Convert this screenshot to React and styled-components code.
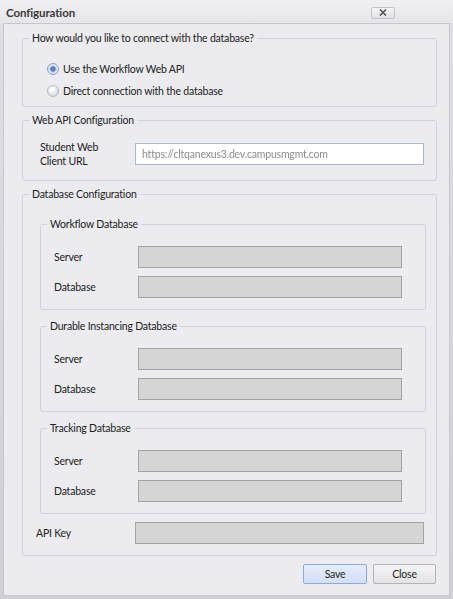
import React from "react";
import styled, { createGlobalStyle } from "styled-components";

const GlobalStyle = createGlobalStyle`
  html, body { margin: 0; padding: 0; }
  body {
    font-family: Lato, "Open Sans", "Liberation Sans", sans-serif;
    font-size: 10.5px;
    letter-spacing: -0.2px;
    color: #222;
    background: #d4d4da;
  }
`;

const Window = styled.div`
  width: 453px;
  height: 599px;
  box-sizing: border-box;
  display: flex;
  flex-direction: column;
  background: linear-gradient(#ececef, #dedee3 30px, #cfcfd5);
  padding: 0 3px 3px 3px;
`;

const TitleBar = styled.div`
  height: 23px;
  flex: none;
  display: flex;
  align-items: center;
  justify-content: space-between;
  background: linear-gradient(#f0f0f3, #e6e6ea);
  margin: 0 -3px;
  padding: 0 58px 0 6px;
`;

const Title = styled.div`
  font-weight: 700;
  font-size: 11.5px;
  letter-spacing: -0.1px;
  color: #3a3a3a;
  margin-top: 1px;
`;

const CloseX = styled.div`
  width: 24px;
  height: 12px;
  margin-top: 2px;
  box-sizing: border-box;
  border: 1px solid #c2c2c8;
  border-radius: 2px;
  background: linear-gradient(#f4f4f6, #e2e2e6);
  display: flex;
  align-items: center;
  justify-content: center;
`;

const Client = styled.div`
  flex: 1;
  box-sizing: border-box;
  border: 1px solid #c6c6cc;
  background: #ececf0;
  padding: 6px 12px 11px 18px;
  display: flex;
  flex-direction: column;
  gap: 5px;
`;

const Group = styled.fieldset`
  margin: 0;
  padding: 0;
  border: 1px solid #d2d2d8;
  border-radius: 3px;
  min-width: 0;
`;

const Legend = styled.legend`
  margin-left: 6px;
  padding: 0 3px;
  line-height: 16px;
  font-size: 10.5px;
`;

const RadioList = styled.div`
  display: flex;
  flex-direction: column;
  padding: 12px 0 4px 24px;
`;

const RadioRow = styled.label`
  display: flex;
  align-items: center;
  height: 22px;
  gap: 4px;
`;

const RadioDot = styled.span`
  width: 12px;
  height: 12px;
  box-sizing: border-box;
  border-radius: 50%;
  border: 1px solid ${(p) => (p.$checked ? "#8da0be" : "#b7b7bd")};
  background: ${(p) =>
    p.$checked
      ? "radial-gradient(circle at 50% 50%, #6d8fdc 0, #4a6cc4 2.2px, #c8d4ec 3px, #e6ebf5 5px)"
      : "radial-gradient(circle at 40% 35%, #ffffff 0, #f4f4f6 3px, #dcdce0 6px)"};
  flex: none;
`;

const FormArea = styled.div`
  display: flex;
  flex-direction: column;
  gap: ${(p) => p.$gap || 8}px;
  padding: ${(p) => p.$pad};
`;

const Row = styled.div`
  display: grid;
  grid-template-columns: ${(p) => p.$label}px 1fr;
  align-items: center;
`;

const Label = styled.div`
  line-height: 14px;
`;

const TextBox = styled.div`
  height: 22px;
  box-sizing: border-box;
  border: 1px solid ${(p) => (p.$enabled ? "#a9b8cf" : "#a3a3a3")};
  background: ${(p) => (p.$enabled ? "#ffffff" : "#d5d5d5")};
  display: flex;
  align-items: center;
  padding-left: 6px;
  color: #8c8c8c;
`;

const BlurText = styled.span`
  filter: blur(0.45px);
`;

const SubGroups = styled.div`
  display: flex;
  flex-direction: column;
  gap: 8px;
  padding: 14px 10px 0 17px;
`;

const ButtonBar = styled.div`
  display: flex;
  justify-content: flex-end;
  gap: 6px;
  margin-top: 3px;
  padding-right: 1px;
`;

const Button = styled.button`
  width: ${(p) => p.$w}px;
  height: 20px;
  box-sizing: border-box;
  font-family: inherit;
  font-size: 10.5px;
  letter-spacing: -0.2px;
  color: #222;
  border-radius: 2px;
  border: 1px solid ${(p) => (p.$primary ? "#8eaad8" : "#b3b3b8")};
  background: ${(p) =>
    p.$primary
      ? "linear-gradient(#e4ecfb, #d4e0f7)"
      : "linear-gradient(#f5f5f6, #e3e3e6)"};
  padding: 0;
`;

function DbGroup({ title }) {
  return (
    <Group>
      <Legend>{title}</Legend>
      <FormArea $gap={8} $pad="14px 23px 11px 13px">
        <Row $label={84}>
          <Label>Server</Label>
          <TextBox />
        </Row>
        <Row $label={84}>
          <Label>Database</Label>
          <TextBox />
        </Row>
      </FormArea>
    </Group>
  );
}

export default function App() {
  return (
    <>
      <GlobalStyle />
      <Window>
        <TitleBar>
          <Title>Configuration</Title>
          <CloseX>
            <svg width="8" height="7" viewBox="0 0 8 7">
              <path d="M1 0.5 L7 6.5 M7 0.5 L1 6.5" stroke="#555" strokeWidth="1.6" />
            </svg>
          </CloseX>
        </TitleBar>
        <Client>
          <Group>
            <Legend>How would you like to connect with the database?</Legend>
            <RadioList>
              <RadioRow>
                <RadioDot $checked />
                Use the Workflow Web API
              </RadioRow>
              <RadioRow>
                <RadioDot />
                Direct connection with the database
              </RadioRow>
            </RadioList>
          </Group>

          <Group>
            <Legend>Web API Configuration</Legend>
            <FormArea $pad="12px 12px 12px 17px">
              <Row $label={95}>
                <Label>
                  Student Web
                  <br />
                  Client URL
                </Label>
                <TextBox $enabled>
                  <BlurText>https://cltqanexus3.dev.campusmgmt.com</BlurText>
                </TextBox>
              </Row>
            </FormArea>
          </Group>

          <Group>
            <Legend>Database Configuration</Legend>
            <SubGroups>
              <DbGroup title="Workflow Database" />
              <DbGroup title="Durable Instancing Database" />
              <DbGroup title="Tracking Database" />
            </SubGroups>
            <FormArea $pad="8px 12px 11px 13px">
              <Row $label={99}>
                <Label>API Key</Label>
                <TextBox />
              </Row>
            </FormArea>
          </Group>

          <ButtonBar>
            <Button $primary $w={64}>Save</Button>
            <Button $w={63}>Close</Button>
          </ButtonBar>
        </Client>
      </Window>
    </>
  );
}
